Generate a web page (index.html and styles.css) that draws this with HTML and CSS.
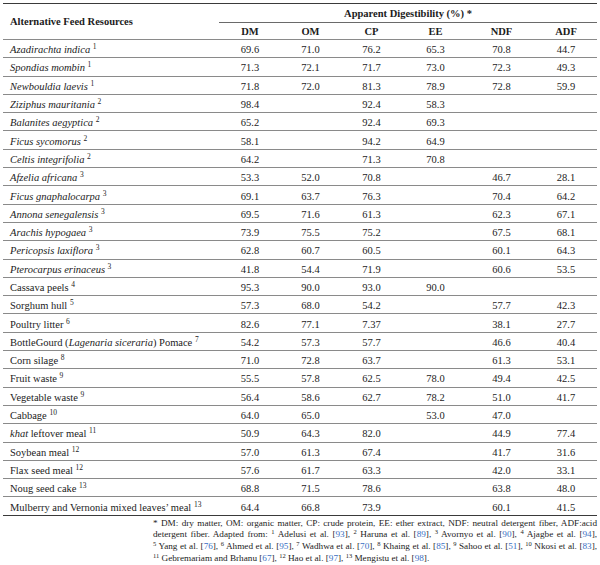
FILE: index.html
```html
<!DOCTYPE html>
<html lang="en">
<head>
<meta charset="utf-8">
<title>Apparent digestibility of alternative feed resources</title>
<link rel="stylesheet" href="styles.css">
</head>
<body>
<div class="page">
<table class="feed">
  <colgroup>
    <col class="c-name"><col class="c-dm"><col class="c-om"><col class="c-cp"><col class="c-ee"><col class="c-ndf"><col class="c-adf">
  </colgroup>
  <thead>
    <tr class="h1">
      <th rowspan="2" class="name-h">Alternative Feed Resources</th>
      <th colspan="6" class="group-h">Apparent Digestibility (%) *</th>
    </tr>
    <tr class="h2">
      <th>DM</th><th>OM</th><th>CP</th><th>EE</th><th>NDF</th><th>ADF</th>
    </tr>
  </thead>
  <tbody>
    <tr><td class="n"><i>Azadirachta indica</i> <sup>1</sup></td><td>69.6</td><td>71.0</td><td>76.2</td><td>65.3</td><td>70.8</td><td>44.7</td></tr>
    <tr><td class="n"><i>Spondias mombin</i> <sup>1</sup></td><td>71.3</td><td>72.1</td><td>71.7</td><td>73.0</td><td>72.3</td><td>49.3</td></tr>
    <tr><td class="n"><i>Newbouldia laevis</i> <sup>1</sup></td><td>71.8</td><td>72.0</td><td>81.3</td><td>78.9</td><td>72.8</td><td>59.9</td></tr>
    <tr><td class="n"><i>Ziziphus mauritania</i> <sup>2</sup></td><td>98.4</td><td></td><td>92.4</td><td>58.3</td><td></td><td></td></tr>
    <tr><td class="n"><i>Balanites aegyptica</i> <sup>2</sup></td><td>65.2</td><td></td><td>92.4</td><td>69.3</td><td></td><td></td></tr>
    <tr><td class="n"><i>Ficus sycomorus</i> <sup>2</sup></td><td>58.1</td><td></td><td>94.2</td><td>64.9</td><td></td><td></td></tr>
    <tr><td class="n"><i>Celtis integrifolia</i> <sup>2</sup></td><td>64.2</td><td></td><td>71.3</td><td>70.8</td><td></td><td></td></tr>
    <tr><td class="n"><i>Afzelia africana</i> <sup>3</sup></td><td>53.3</td><td>52.0</td><td>70.8</td><td></td><td>46.7</td><td>28.1</td></tr>
    <tr><td class="n"><i>Ficus gnaphalocarpa</i> <sup>3</sup></td><td>69.1</td><td>63.7</td><td>76.3</td><td></td><td>70.4</td><td>64.2</td></tr>
    <tr><td class="n"><i>Annona senegalensis</i> <sup>3</sup></td><td>69.5</td><td>71.6</td><td>61.3</td><td></td><td>62.3</td><td>67.1</td></tr>
    <tr><td class="n"><i>Arachis hypogaea</i> <sup>3</sup></td><td>73.9</td><td>75.5</td><td>75.2</td><td></td><td>67.5</td><td>68.1</td></tr>
    <tr><td class="n"><i>Pericopsis laxiflora</i> <sup>3</sup></td><td>62.8</td><td>60.7</td><td>60.5</td><td></td><td>60.1</td><td>64.3</td></tr>
    <tr><td class="n"><i>Pterocarpus erinaceus</i> <sup>3</sup></td><td>41.8</td><td>54.4</td><td>71.9</td><td></td><td>60.6</td><td>53.5</td></tr>
    <tr><td class="n">Cassava peels <sup>4</sup></td><td>95.3</td><td>90.0</td><td>93.0</td><td>90.0</td><td></td><td></td></tr>
    <tr><td class="n">Sorghum hull <sup>5</sup></td><td>57.3</td><td>68.0</td><td>54.2</td><td></td><td>57.7</td><td>42.3</td></tr>
    <tr><td class="n">Poultry litter <sup>6</sup></td><td>82.6</td><td>77.1</td><td>7.37</td><td></td><td>38.1</td><td>27.7</td></tr>
    <tr><td class="n">BottleGourd (<i>Lagenaria siceraria</i>) Pomace <sup>7</sup></td><td>54.2</td><td>57.3</td><td>57.7</td><td></td><td>46.6</td><td>40.4</td></tr>
    <tr><td class="n">Corn silage <sup>8</sup></td><td>71.0</td><td>72.8</td><td>63.7</td><td></td><td>61.3</td><td>53.1</td></tr>
    <tr><td class="n">Fruit waste <sup>9</sup></td><td>55.5</td><td>57.8</td><td>62.5</td><td>78.0</td><td>49.4</td><td>42.5</td></tr>
    <tr><td class="n">Vegetable waste <sup>9</sup></td><td>56.4</td><td>58.6</td><td>62.7</td><td>78.2</td><td>51.0</td><td>41.7</td></tr>
    <tr><td class="n">Cabbage <sup>10</sup></td><td>64.0</td><td>65.0</td><td></td><td>53.0</td><td>47.0</td><td></td></tr>
    <tr><td class="n"><i>khat</i> leftover meal <sup>11</sup></td><td>50.9</td><td>64.3</td><td>82.0</td><td></td><td>44.9</td><td>77.4</td></tr>
    <tr><td class="n">Soybean meal <sup>12</sup></td><td>57.0</td><td>61.3</td><td>67.4</td><td></td><td>41.7</td><td>31.6</td></tr>
    <tr><td class="n">Flax seed meal <sup>12</sup></td><td>57.6</td><td>61.7</td><td>63.3</td><td></td><td>42.0</td><td>33.1</td></tr>
    <tr><td class="n">Noug seed cake <sup>13</sup></td><td>68.8</td><td>71.5</td><td>78.6</td><td></td><td>63.8</td><td>48.0</td></tr>
    <tr class="last"><td class="n">Mulberry and Vernonia mixed leaves’ meal <sup>13</sup></td><td>64.4</td><td>66.8</td><td>73.9</td><td></td><td>60.1</td><td>41.5</td></tr>
  </tbody>
</table>
<div class="notes">
  <div class="ln">* DM: dry matter, OM: organic matter, CP: crude protein, EE: ether extract, NDF: neutral detergent fiber, ADF:acid</div>
  <div class="ln">detergent fiber. Adapted from: <sup>1</sup> Adelusi et al. [<a>93</a>], <sup>2</sup> Haruna et al. [<a>89</a>], <sup>3</sup> Avornyo et al. [<a>90</a>], <sup>4</sup> Ajagbe et al. [<a>94</a>],</div>
  <div class="ln"><sup>5</sup> Yang et al. [<a>76</a>], <sup>6</sup> Ahmed et al. [<a>95</a>], <sup>7</sup> Wadhwa et al. [<a>70</a>], <sup>8</sup> Khaing et al. [<a>85</a>], <sup>9</sup> Sahoo et al. [<a>51</a>], <sup>10</sup> Nkosi et al. [<a>83</a>],</div>
  <div class="ln end"><sup>11</sup> Gebremariam and Brhanu [<a>67</a>], <sup>12</sup> Hao et al. [<a>97</a>], <sup>13</sup> Mengistu et al. [<a>98</a>].</div>
</div>
</div>
</body>
</html>
```

FILE: styles.css
```css
html, body {
  margin: 0;
  padding: 0;
  background: #ffffff;
}

.page {
  padding: 3px 3px 0 3px;
  font-family: "Liberation Serif", "DejaVu Serif", serif;
  color: #1c1c1c;
}

.feed {
  width: 594px;
  border-collapse: collapse;
  table-layout: fixed;
  font-size: 10.5px;
  line-height: 13px;
  border-top: 1.5px solid #3a3a3a;
  border-bottom: 1.5px solid #3a3a3a;
}

.c-name { width: 216px; }
.c-dm { width: 62px; }
.c-om { width: 59px; }
.c-cp { width: 63px; }
.c-ee { width: 65px; }
.c-ndf { width: 67px; }
.c-adf { width: 62px; }

.feed th {
  font-weight: bold;
  text-align: center;
  padding: 0;
}

.feed .h1 th {
  height: 18px;
}

.feed .h2 th {
  height: 15px;
  border-bottom: 1px solid #8a8a8a;
  padding-top: 1px;
}

.feed .name-h {
  text-align: left;
  padding-left: 7px;
  vertical-align: middle;
  border-bottom: 1px solid #8a8a8a;
}

.feed .group-h {
  border-bottom: 1px solid #6a6a6a;
  vertical-align: middle;
}

.feed td {
  text-align: center;
  padding: 3px 0 1px 0;
  height: 13.3px;
  border-bottom: 1px solid #8a8a8a;
  white-space: nowrap;
}

.feed td.n {
  text-align: left;
  padding-left: 7px;
}

.feed .last td {
  border-bottom: none;
}

.feed sup {
  font-size: 7.5px;
  line-height: 0;
  vertical-align: 4px;
}

.notes {
  margin: 2px 0 0 150px;
  width: 444px;
  font-size: 9.2px;
  line-height: 11.7px;
}

.notes .ln {
  text-align: justify;
  text-align-last: justify;
  white-space: nowrap;
}

.notes .ln.end {
  text-align-last: left;
}

.notes sup {
  font-size: 6.5px;
  line-height: 0;
  vertical-align: 3px;
}

.notes a {
  color: #3a6fc4;
  text-decoration: none;
}
```
